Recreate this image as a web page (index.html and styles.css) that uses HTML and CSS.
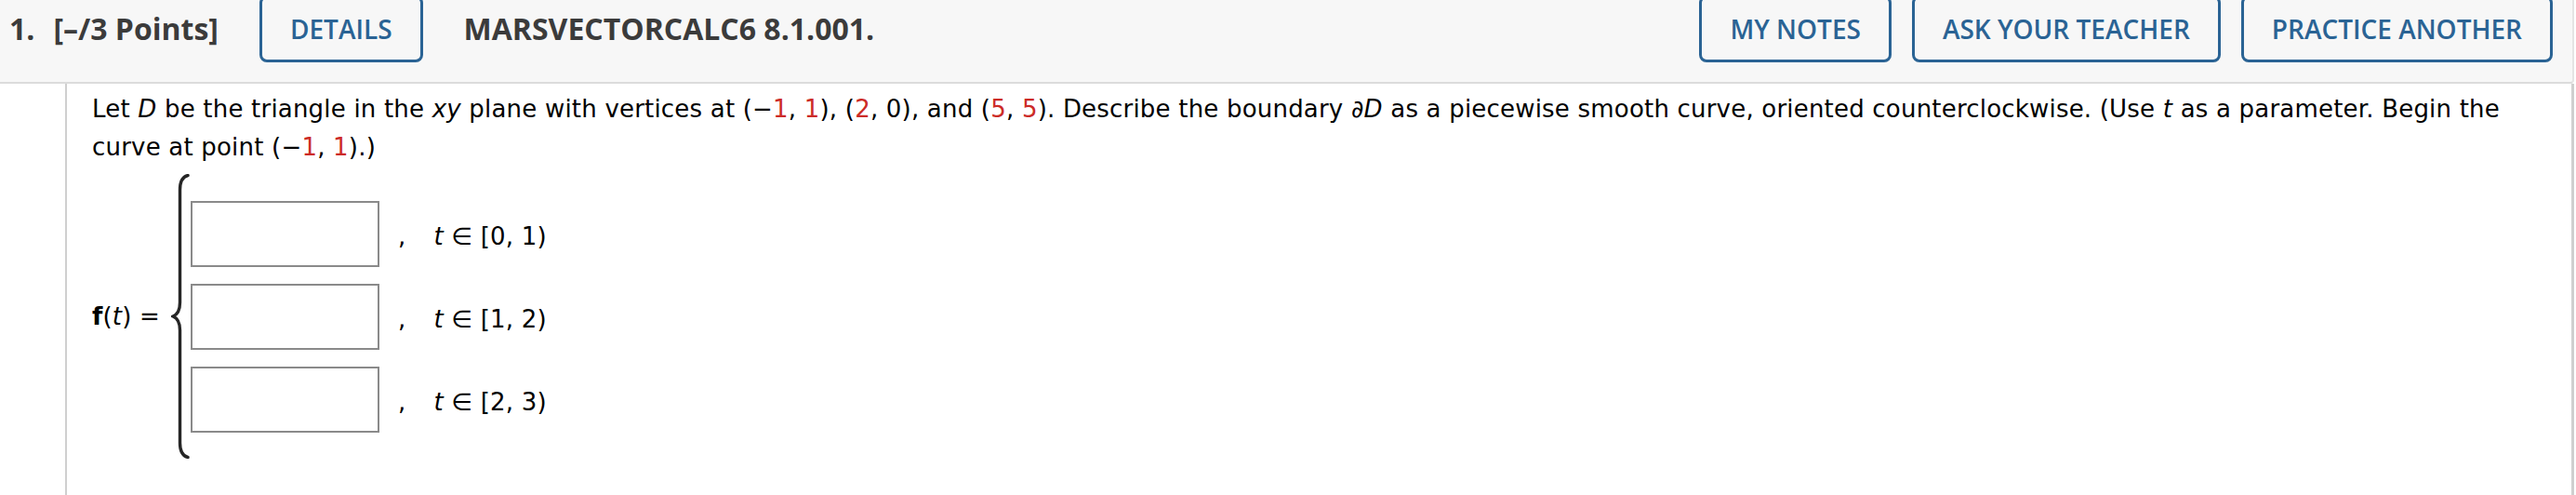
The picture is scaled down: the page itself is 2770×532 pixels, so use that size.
FILE: index.html
```html
<!DOCTYPE html>
<html lang="en">

<head>
    <meta charset="UTF-8">
    <meta name="viewport" content="width=device-width, initial-scale=1.0">
    <title>Question 1</title>
    <link rel="stylesheet" href="styles.css">
</head>

<body>
    <div class="question">
        <div class="q-header">
            <span class="q-num">1.</span>
            <span class="q-points">[–/3 Points]</span>
            <button class="q-btn q-details">DETAILS</button>
            <span class="q-title">MARSVECTORCALC6 8.1.001.</span>
            <div class="q-actions">
                <button class="q-btn">MY NOTES</button>
                <button class="q-btn">ASK YOUR TEACHER</button>
                <button class="q-btn">PRACTICE ANOTHER</button>
            </div>
        </div>

        <div class="q-body">
            <div class="q-gutter"></div>
            <div class="q-content">
                <p class="q-text">
                    Let <i>D</i> be the triangle in the <i>xy</i> plane with vertices at
                    (−<span class="rnd">1</span>, <span class="rnd">1</span>),
                    (<span class="rnd">2</span>, 0), and (<span class="rnd">5</span>, <span class="rnd">5</span>).
                    Describe the boundary <i>∂D</i> as a piecewise smooth curve, oriented counterclockwise.
                    (Use <i>t</i> as a parameter. Begin the curve at point (−<span class="rnd">1</span>, <span class="rnd">1</span>).)
                </p>

                <div class="piecewise">
                    <span class="fn-label"><b>f</b>(<i>t</i>) =</span>
                    <svg class="brace" viewBox="0 0 20 306" width="20" height="306">
                        <path d="M18,1.5 C12,3 9.5,8 9.5,17 L9.5,138 C9.5,147 7,151 2,153 C7,155 9.5,159 9.5,168 L9.5,289 C9.5,298 12,303 18,304.5" />
                    </svg>
                    <div class="cases">
                        <div class="case">
                            <input class="answer" type="text">
                            <span class="comma">,</span>
                            <span class="interval"><i>t</i> ∈ [0, 1)</span>
                        </div>
                        <div class="case">
                            <input class="answer" type="text">
                            <span class="comma">,</span>
                            <span class="interval"><i>t</i> ∈ [1, 2)</span>
                        </div>
                        <div class="case">
                            <input class="answer" type="text">
                            <span class="comma">,</span>
                            <span class="interval"><i>t</i> ∈ [2, 3)</span>
                        </div>
                    </div>
                </div>
            </div>
        </div>
    </div>
</body>

</html>
```

FILE: styles.css
```css
body {
    margin: 0;
    background: #fff;
    overflow: hidden;
}

.question {
    width: 2768px;
    margin-top: -5px;
}

/* header bar */
.q-header {
    display: flex;
    align-items: center;
    padding-bottom: 21px;
    background-color: #f7f7f7;
    border-bottom: 2px solid #dcdcdc;
    border-right: 2px solid #e4e4e4;
    border-bottom-right-radius: 4px;
    font-family: "Open Sans", "Liberation Sans", sans-serif;
    color: #3b3b3b;
}

.q-num,
.q-points,
.q-title {
    font-size: 32px;
    font-weight: 700;
    line-height: 40px;
}

.q-num {
    padding-left: 10px;
    margin-right: 20px;
}

.q-btn {
    height: 72px;
    padding: 0 30px;
    border: 3px solid #2a6394;
    border-radius: 8px;
    background: transparent;
    color: #2a6394;
    font-family: "Open Sans", "Liberation Sans", sans-serif;
    font-size: 28px;
    font-weight: 600;
    line-height: 40px;
}

.q-details {
    margin: 0 44px 0 44px;
}

.q-actions {
    display: flex;
    gap: 22px;
    margin-left: auto;
    margin-right: 21px;
}

/* question body */
.q-body {
    display: flex;
    min-height: 460px;
    border-right: 3px solid #cfcfcf;
}

.q-gutter {
    width: 70px;
    flex: none;
}

.q-content {
    flex: 1;
    border-left: 2px solid #cfcfcf;
    padding: 7px 70px 0 27px;
    font-family: "DejaVu Sans", Verdana, sans-serif;
    font-size: 26px;
    line-height: 41px;
    letter-spacing: 0.2px;
    color: #000;
}

.q-text {
    margin: 0;
}

.rnd {
    color: #cc2b27;
}

/* piecewise answer */
.piecewise {
    display: flex;
    align-items: center;
    margin-top: 8px;
}

.fn-label {
    margin-right: 12px;
    white-space: pre;
}

.brace {
    flex: none;
}

.brace path {
    fill: none;
    stroke: #262626;
    stroke-width: 3.4;
    stroke-linecap: round;
}

.cases {
    display: flex;
    flex-direction: column;
    gap: 18px;
    margin-left: 1px;
}

.case {
    display: flex;
    align-items: center;
}

.answer {
    box-sizing: border-box;
    width: 203px;
    height: 71px;
    margin: 0;
    border: 2px solid #8a8a8a;
    background: #fff;
}

.comma {
    margin-left: 20px;
    padding-top: 6px;
}

.interval {
    margin-left: 30px;
    padding-top: 6px;
}
```
